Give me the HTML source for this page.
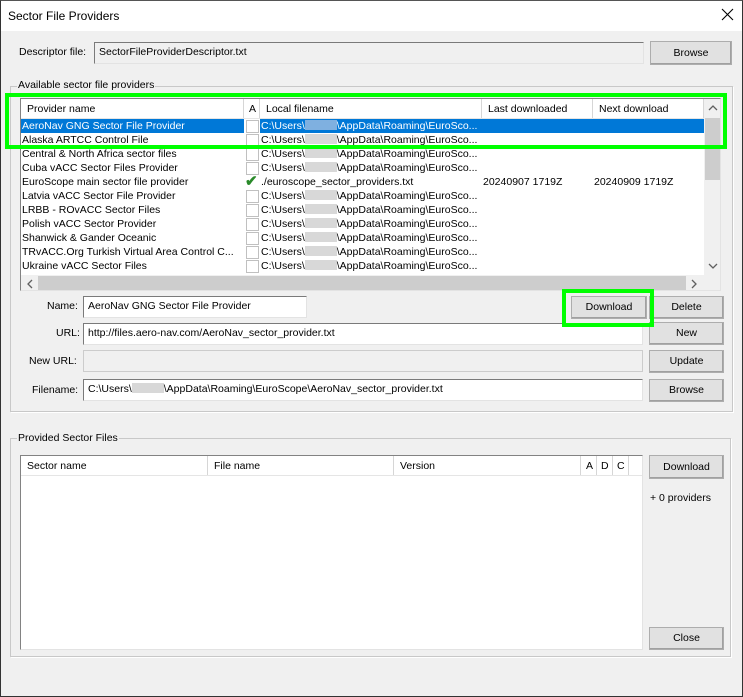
<!DOCTYPE html>
<html><head><meta charset="utf-8"><style>
*{box-sizing:border-box;margin:0;padding:0}
body{width:743px;height:697px;background:#f0f0f0;font-family:"Liberation Sans",sans-serif;font-size:10.5px;color:#000;position:relative;overflow:hidden}
.a{position:absolute}
.win{left:0;top:0;width:743px;height:697px;border:1px solid #333;border-top:1px solid #555}
.title{left:1px;top:1px;width:741px;height:30px;background:#fff}
.btn{position:absolute;background:#e1e1e1;border:1px solid #adadad;box-shadow:inset -1px -1px 0 #a0a0a0;text-align:center;font-size:10.5px}
.inp{position:absolute;background:#fff;border:1px solid #7a7a7a;border-right-color:#e3e3e3;border-bottom-color:#e3e3e3;padding:3px 4px;font-size:10.5px;white-space:nowrap;overflow:hidden}
.grp{position:absolute;border:1px solid #c8c8c8;box-shadow:1px 1px 0 #fff}
.glab{position:absolute;background:#f0f0f0;padding:0 1px;font-size:10.5px}
.hdr{position:absolute;height:19px;border-right:1px solid #d6d6d6;padding:4px 0 0 6px;white-space:nowrap;overflow:hidden;background:#fff}
.row{position:absolute;left:0;height:14px;width:683px;white-space:nowrap;line-height:14px}
.row span{position:absolute;top:0}
.cb{position:absolute;left:225px;top:1px;width:13px;height:13px;border:1px solid #c0c0c0;background:#fff}
.gr{position:absolute;border:4px solid #00ff00}
i.bl{display:inline-block;width:32px;height:10px;background:#d8d8d8;vertical-align:-1px;font-style:normal}
</style></head><body>
<div class="a win"></div>
<div class="a title"></div>
<div class="a" style="left:8px;top:9px;font-size:12px">Sector File Providers</div>
<svg class="a" style="left:721px;top:8px" width="13" height="13"><path d="M1 1L12 12M12 1L1 12" stroke="#000" stroke-width="1.1"/></svg>

<div class="a" style="left:19px;top:46px">Descriptor file:</div>
<div class="inp" style="left:94px;top:42px;width:550px;height:22px;background:#f0f0f0">SectorFileProviderDescriptor.txt</div>
<div class="btn" style="left:650px;top:41px;width:82px;height:24px;line-height:22px">Browse</div>

<div class="grp" style="left:10px;top:86px;width:723px;height:326px"></div>
<div class="glab" style="left:17px;top:79px">Available sector file providers</div>

<div class="a" style="left:20px;top:98px;width:701px;height:193px;background:#fff;border:1px solid #828282;border-right-color:#e3e3e3;border-bottom-color:#e3e3e3;overflow:hidden">
 <div class="hdr" style="left:0;top:0;width:223px">Provider name</div>
 <div class="hdr" style="left:223px;top:0;width:16px;padding-left:5px">A</div>
 <div class="hdr" style="left:239px;top:0;width:222px">Local filename</div>
 <div class="hdr" style="left:461px;top:0;width:111px">Last downloaded</div>
 <div class="hdr" style="left:572px;top:0;width:111px">Next download</div>
 <div class="a" style="left:0;top:19px;width:683px;height:1px;background:#e5e5e5"></div>
 <div class="a" style="left:683px;top:0;width:17px;height:176px;background:#f0f0f0"></div>
 <div class="a" style="left:684px;top:19px;width:15px;height:62px;background:#cdcdcd"></div>
 <svg class="a" style="left:687px;top:6px" width="10" height="6"><path d="M1 5L5 1L9 5" stroke="#606060" fill="none" stroke-width="1.3"/></svg>
 <svg class="a" style="left:687px;top:164px" width="10" height="6"><path d="M1 1L5 5L9 1" stroke="#606060" fill="none" stroke-width="1.3"/></svg>
 <div class="a" style="left:0;top:176px;width:700px;height:16px;background:#f0f0f0"></div>
 <div class="a" style="left:17px;top:177px;width:648px;height:14px;background:#cdcdcd"></div>
 <svg class="a" style="left:6px;top:180px" width="6" height="10"><path d="M5 1L1 5L5 9" stroke="#606060" fill="none" stroke-width="1.3"/></svg>
 <svg class="a" style="left:670px;top:180px" width="6" height="10"><path d="M1 1L5 5L1 9" stroke="#606060" fill="none" stroke-width="1.3"/></svg>

 <div class="row" style="top:20px"><div class="a" style="left:0;top:0;width:223px;height:14px;background:#0078d7"></div><div class="a" style="left:239px;top:0;width:444px;height:14px;background:#0078d7"></div><span style="left:1px;color:#fff">AeroNav GNG Sector File Provider</span><div class="cb"></div><span style="left:240px;color:#fff">C:\Users\<i class="bl" style="background:#7fb0e0"></i>\AppData\Roaming\EuroSco...</span></div>
 <div class="row" style="top:34px"><span style="left:1px">Alaska ARTCC Control File</span><div class="cb"></div><span style="left:240px">C:\Users\<i class="bl"></i>\AppData\Roaming\EuroSco...</span></div>
 <div class="row" style="top:48px"><span style="left:1px">Central &amp; North Africa sector files</span><div class="cb"></div><span style="left:240px">C:\Users\<i class="bl"></i>\AppData\Roaming\EuroSco...</span></div>
 <div class="row" style="top:62px"><span style="left:1px">Cuba vACC Sector Files Provider</span><div class="cb"></div><span style="left:240px">C:\Users\<i class="bl"></i>\AppData\Roaming\EuroSco...</span></div>
 <div class="row" style="top:76px"><span style="left:1px">EuroScope main sector file provider</span><span style="left:224px;color:#2a8a2a;font-size:15px;font-weight:bold">✔</span><span style="left:240px">./euroscope_sector_providers.txt</span><span style="left:462px">20240907 1719Z</span><span style="left:573px">20240909 1719Z</span></div>
 <div class="row" style="top:90px"><span style="left:1px">Latvia vACC Sector File Provider</span><div class="cb"></div><span style="left:240px">C:\Users\<i class="bl"></i>\AppData\Roaming\EuroSco...</span></div>
 <div class="row" style="top:104px"><span style="left:1px">LRBB - ROvACC Sector Files</span><div class="cb"></div><span style="left:240px">C:\Users\<i class="bl"></i>\AppData\Roaming\EuroSco...</span></div>
 <div class="row" style="top:118px"><span style="left:1px">Polish vACC Sector Provider</span><div class="cb"></div><span style="left:240px">C:\Users\<i class="bl"></i>\AppData\Roaming\EuroSco...</span></div>
 <div class="row" style="top:132px"><span style="left:1px">Shanwick &amp; Gander Oceanic</span><div class="cb"></div><span style="left:240px">C:\Users\<i class="bl"></i>\AppData\Roaming\EuroSco...</span></div>
 <div class="row" style="top:146px"><span style="left:1px">TRvACC.Org Turkish Virtual Area Control C...</span><div class="cb"></div><span style="left:240px">C:\Users\<i class="bl"></i>\AppData\Roaming\EuroSco...</span></div>
 <div class="row" style="top:160px"><span style="left:1px">Ukraine vACC Sector Files</span><div class="cb"></div><span style="left:240px">C:\Users\<i class="bl"></i>\AppData\Roaming\EuroSco...</span></div>
</div>

<div class="a" style="left:47px;top:300px">Name:</div>
<div class="inp" style="left:83px;top:296px;width:224px;height:22px">AeroNav GNG Sector File Provider</div>
<div class="btn" style="left:571px;top:296px;width:76px;height:23px;line-height:21px">Download</div>
<div class="btn" style="left:649px;top:296px;width:75px;height:23px;line-height:21px">Delete</div>

<div class="a" style="left:56px;top:327px">URL:</div>
<div class="inp" style="left:83px;top:323px;width:560px;height:22px">http://files.aero-nav.com/AeroNav_sector_provider.txt</div>
<div class="btn" style="left:649px;top:322px;width:75px;height:23px;line-height:21px">New</div>

<div class="a" style="left:29px;top:355px">New URL:</div>
<div class="inp" style="left:83px;top:350px;width:560px;height:22px;background:#f0f0f0;border-color:#ccc"></div>
<div class="btn" style="left:649px;top:350px;width:75px;height:23px;line-height:21px">Update</div>

<div class="a" style="left:32px;top:384px">Filename:</div>
<div class="inp" style="left:83px;top:379px;width:560px;height:22px">C:\Users\<i class="bl"></i>\AppData\Roaming\EuroScope\AeroNav_sector_provider.txt</div>
<div class="btn" style="left:649px;top:379px;width:75px;height:23px;line-height:21px">Browse</div>

<div class="grp" style="left:10px;top:438px;width:721px;height:219px"></div>
<div class="glab" style="left:17px;top:432px">Provided Sector Files</div>

<div class="a" style="left:20px;top:455px;width:623px;height:195px;background:#fff;border:1px solid #828282;border-right-color:#e3e3e3;border-bottom-color:#e3e3e3;overflow:hidden">
 <div class="hdr" style="left:0;top:0;width:187px">Sector name</div>
 <div class="hdr" style="left:187px;top:0;width:186px">File name</div>
 <div class="hdr" style="left:373px;top:0;width:187px">Version</div>
 <div class="hdr" style="left:560px;top:0;width:16px;padding-left:5px">A</div>
 <div class="hdr" style="left:576px;top:0;width:16px;padding-left:4px">D</div>
 <div class="hdr" style="left:592px;top:0;width:16px;padding-left:4px">C</div>
 <div class="a" style="left:0;top:19px;width:621px;height:1px;background:#e5e5e5"></div>
</div>
<div class="btn" style="left:649px;top:455px;width:75px;height:24px;line-height:22px">Download</div>
<div class="a" style="left:650px;top:492px">+ 0 providers</div>
<div class="btn" style="left:649px;top:627px;width:75px;height:23px;line-height:21px">Close</div>

<div class="gr" style="left:5px;top:93px;width:722px;height:56px"></div>
<div class="gr" style="left:562px;top:289px;width:92px;height:38px"></div>
</body></html>
